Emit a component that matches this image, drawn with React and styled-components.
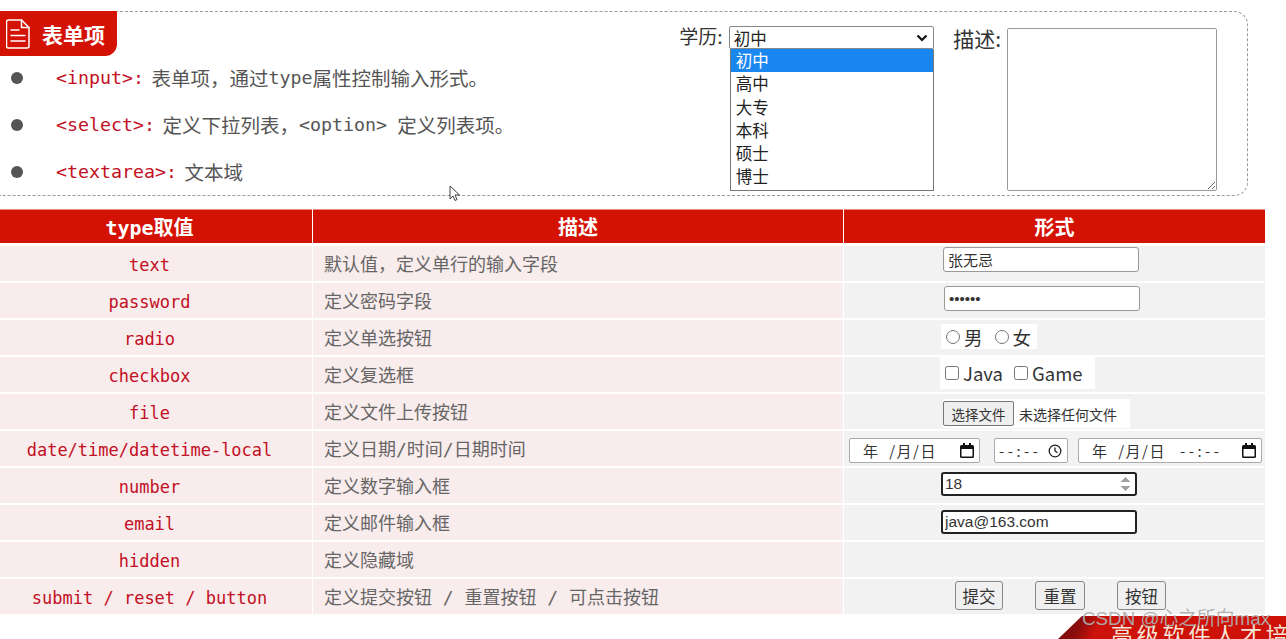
import React from "react";
import styled, { createGlobalStyle } from "styled-components";

const GlobalStyle = createGlobalStyle`
  html, body {
    margin: 0;
    padding: 0;
    background: #fff;
    overflow: hidden;
  }
  body {
    font-family: "Noto Sans CJK SC", "Noto Sans", sans-serif;
    color: #333;
  }
`;

const Page = styled.div`
  position: relative;
  width: 1286px;
  height: 639px;
  overflow: hidden;
  padding-top: 11px;
  box-sizing: border-box;
`;

const Panel = styled.section`
  display: flex;
  box-sizing: border-box;
  width: 1248px;
  height: 185px;
  padding-right: 30px;
  border: 1px dashed #999;
  border-left: none;
  border-radius: 0 14px 14px 0;
`;

const Intro = styled.div`
  flex: 1;
  margin-top: -1px;
`;

const Badge = styled.h2`
  display: flex;
  align-items: center;
  gap: 11px;
  box-sizing: border-box;
  width: 117px;
  height: 45px;
  margin: 0;
  padding-left: 6px;
  background: #d41204;
  border-radius: 0 0 12px 0;
  color: #fff;
  font-size: 21px;
  font-weight: 700;
`;

const Points = styled.ul`
  list-style: none;
  margin: -2px 0 0;
  padding: 0;
`;

const Point = styled.li`
  display: flex;
  align-items: center;
  height: 47px;
  font-size: 19.5px;
  color: #555;
  white-space: pre;

  &::before {
    content: "";
    width: 12px;
    height: 12px;
    margin: 0 33px 0 11px;
    border-radius: 50%;
    background: #555;
  }
`;

const Code = styled.span`
  font-family: "DejaVu Sans Mono", monospace;
  font-size: 18.3px;
  margin-right: ${(p) => p.$after || 0}px;
`;

const Tag = styled(Code)`
  color: #c20f24;
  margin-right: 3px;
`;

const FormArea = styled.div`
  display: flex;
  margin-top: 14px;
`;

const Label = styled.label`
  font-size: ${(p) => p.$size}px;
  line-height: ${(p) => p.$line}px;
  margin-right: 6px;
  color: #333;
`;

const Picker = styled.div`
  display: flex;
  flex-direction: column;
  width: 205px;
  margin-right: 19.5px;
`;

const SelectBox = styled.div`
  display: flex;
  align-items: center;
  justify-content: space-between;
  box-sizing: border-box;
  width: 205px;
  height: 23px;
  padding: 0 5px 0 4px;
  font-size: 16.5px;
  color: #222;
  background: #fff;
  border: 1px solid #888;
  border-radius: 2px;
`;

const OptionList = styled.ul`
  list-style: none;
  box-sizing: border-box;
  width: 204px;
  height: 142px;
  margin: 0 0 0 1px;
  padding: 0;
  background: #fff;
  border: 1px solid #777;
  border-top: none;
`;

const Option = styled.li`
  box-sizing: border-box;
  height: 23.3px;
  padding-left: 5px;
  font-size: 16.5px;
  line-height: 23px;
  color: ${(p) => (p.$active ? "#fff" : "#222")};
  background: ${(p) => (p.$active ? "#1a86f0" : "transparent")};
`;

const Notes = styled.textarea`
  box-sizing: border-box;
  width: 210px;
  height: 163px;
  margin: 2px 0 0 0;
  background: #fff;
  border: 1px solid #999;
  border-radius: 2px;
  outline: none;
`;

const Table = styled.div`
  display: grid;
  grid-template-columns: 312px 530px 421px;
  grid-template-rows: 35px repeat(10, 35px);
  column-gap: 1px;
  row-gap: 2px;
  width: 1265px;
  margin-top: 13px;
`;

const Head = styled.div`
  display: flex;
  align-items: center;
  justify-content: center;
  margin-bottom: 1px;
  box-sizing: border-box;
  padding-right: ${(p) => p.$shift || 0}px;
  background: #d41204;
  border-top: 1px solid #e98d7d;
  color: #fff;
  font-size: 20px;
  font-weight: 700;
`;

const HeadCode = styled.span`
  font-family: "DejaVu Sans Mono", monospace;
`;

const TypeCell = styled.div`
  display: flex;
  align-items: center;
  justify-content: center;
  padding: 2px 13px 0 0;
  background: #f9ecec;
  color: #c20f24;
  font-family: "DejaVu Sans Mono", monospace;
  font-size: 17px;
`;

const DescCell = styled.div`
  display: flex;
  align-items: center;
  padding: 0 0 2px 11px;
  background: #f9ecec;
  color: #666;
  font-family: "DejaVu Sans Mono", "Noto Sans CJK SC", sans-serif;
  font-size: 18px;
  white-space: pre;
`;

const FormCell = styled.div`
  display: flex;
  align-items: flex-start;
  box-sizing: border-box;
  padding: ${(p) => p.$top || 0}px 0 0 ${(p) => p.$left || 0}px;
  background: #f2f2f2;
`;

const Field = styled.input`
  box-sizing: border-box;
  width: 196px;
  height: ${(p) => (p.$dark ? 24 : 25)}px;
  padding: 0 ${(p) => (p.$dark ? 2 : 4)}px;
  font-family: ${(p) => (p.$latin ? '"Liberation Sans"' : '"Noto Sans CJK SC"')}, sans-serif;
  font-size: ${(p) => (p.$dark ? 15.5 : 15)}px;
  color: #333;
  background: #fff;
  border: ${(p) => (p.$dark ? "2px solid #222" : "1px solid #999")};
  border-radius: 3px;
  outline: none;

  &::-webkit-inner-spin-button {
    opacity: 1;
    filter: contrast(3);
  }
`;

const ChoiceBox = styled.div`
  display: flex;
  align-items: center;
  height: ${(p) => p.$height}px;
  padding: 0 ${(p) => p.$right}px 0 5px;
  background: #fff;
  font-size: 18.5px;
  color: #333;
`;

const Radio = styled.input`
  width: 14px;
  height: 14px;
  margin: 0 4px 0 ${(p) => p.$gap || 0}px;
`;

const FileBox = styled.div`
  display: flex;
  align-items: center;
  height: 29px;
  padding-right: 13px;
  background: #fff;
  font-size: 14px;
  color: #333;
`;

const FileButton = styled.button`
  box-sizing: border-box;
  width: 71px;
  height: 25px;
  margin-right: 5px;
  padding: 0;
  font-family: "Noto Sans CJK SC", sans-serif;
  font-size: 13.5px;
  color: #333;
  background: #efefef;
  border: 1px solid #777;
  border-radius: 2px;
`;

const DateRow = styled.div`
  display: flex;
`;

const DateField = styled.div`
  display: flex;
  align-items: center;
  box-sizing: border-box;
  width: ${(p) => p.$width}px;
  height: 25px;
  margin-right: ${(p) => p.$after || 0}px;
  padding: 0 ${(p) => p.$end || 5}px 0 ${(p) => p.$start || 13}px;
  background: #fff;
  border: 1px solid #aaa;
  border-radius: 2px;
  font-size: 15px;
  letter-spacing: 1.5px;
  color: #333;
  white-space: pre;

  svg {
    margin-left: auto;
  }
`;

const Dashes = styled.span`
  margin-left: ${(p) => p.$gap || 0}px;
  letter-spacing: 3.5px;
`;

const Action = styled.button`
  box-sizing: border-box;
  width: ${(p) => p.$width}px;
  height: 29px;
  margin-right: ${(p) => p.$after || 0}px;
  padding: 0;
  font-family: "Noto Sans CJK SC", sans-serif;
  font-size: 16.5px;
  color: #333;
  background: #f0f0f0;
  border: 1px solid #888;
  border-radius: 3px;
`;

const Banner = styled.div`
  position: absolute;
  right: 0;
  bottom: 0;
  width: 228px;
  height: 23px;
  overflow: hidden;
  padding-left: 53px;
  box-sizing: border-box;
  clip-path: polygon(24px 0, 100% 0, 100% 100%, 0 100%);
  background: linear-gradient(115deg, #7a0c0c 0, #8d0d0d 24px, #cc120a 40px, #cf1208 100%);
  color: #f6e6d8;
  font-family: "Liberation Serif", "Noto Sans CJK SC", serif;
  font-size: 22px;
  line-height: 40px;
  letter-spacing: 3.8px;
  white-space: nowrap;
`;

const Watermark = styled.div`
  position: absolute;
  left: 1082px;
  top: 608px;
  font-family: "Liberation Sans", "Noto Sans CJK SC", sans-serif;
  font-size: 18.8px;
  line-height: 22px;
  color: rgba(175, 175, 175, 0.95);
  white-space: nowrap;
`;

const Cursor = styled.svg`
  position: absolute;
  left: 449px;
  top: 185px;
`;

const DocIcon = () => (
  <svg width="25" height="30" viewBox="0 0 25 30" fill="none" stroke="#fff" strokeWidth="1.5" strokeLinejoin="round" strokeLinecap="round">
    <path d="M2.5 1h13l7.5 7.5V27a2 2 0 0 1-2 2H2.5a2 2 0 0 1-2-2V3a2 2 0 0 1 2-2z" />
    <path d="M15.5 1v7.5H23" />
    <path d="M5 11h8M5 16.5h14M5 22h14" />
  </svg>
);

const ChevronIcon = () => (
  <svg width="12" height="8" viewBox="0 0 12 8" fill="none" stroke="#111" strokeWidth="2.2">
    <path d="M1.5 1.5 6 6l4.500-4.500" />
  </svg>
);

const CalendarIcon = () => (
  <svg width="14" height="15" viewBox="0 0 14 15">
    <path d="M3 0h2v2h4V0h2v2h1.500A1.500 1.500 0 0 1 14 3.500v10a1.500 1.500 0 0 1-1.500 1.500h-11A1.500 1.500 0 0 1 0 13.500v-10A1.500 1.500 0 0 1 1.500 2H3z M1.500 6v7.500h11V6z" fill="#111" fillRule="evenodd" />
  </svg>
);

const ClockIcon = () => (
  <svg width="14" height="14" viewBox="0 0 14 14" fill="none" stroke="#222" strokeWidth="1.3">
    <circle cx="7" cy="7" r="5.800" />
    <path d="M7 3.500V7l2.500 1.800" />
  </svg>
);

const types = [
  "text",
  "password",
  "radio",
  "checkbox",
  "file",
  "date/time/datetime-local",
  "number",
  "email",
  "hidden",
  "submit / reset / button",
];

const descriptions = [
  "默认值，定义单行的输入字段",
  "定义密码字段",
  "定义单选按钮",
  "定义复选框",
  "定义文件上传按钮",
  "定义日期/时间/日期时间",
  "定义数字输入框",
  "定义邮件输入框",
  "定义隐藏域",
  "定义提交按钮 / 重置按钮 / 可点击按钮",
];

const samples = [
  <FormCell $top={1} $left={99}>
    <Field type="text" defaultValue="张无忌" readOnly />
  </FormCell>,
  <FormCell $top={3} $left={100}>
    <Field type="password" defaultValue="123456" $latin readOnly />
  </FormCell>,
  <FormCell $top={4} $left={97}>
    <ChoiceBox $height={25} $right={6}>
      <Radio type="radio" name="sex" />男
      <Radio type="radio" name="sex" $gap={12} />女
    </ChoiceBox>
  </FormCell>,
  <FormCell $left={96}>
    <ChoiceBox $height={32} $right={12}>
      <Radio type="checkbox" />
      Java
      <Radio type="checkbox" $gap={11} />
      Game
    </ChoiceBox>
  </FormCell>,
  <FormCell $top={5} $left={99}>
    <FileBox>
      <FileButton>选择文件</FileButton>未选择任何文件
    </FileBox>
  </FormCell>,
  <FormCell $top={7} $left={5}>
    <DateRow>
      <DateField $width={131} $after={14}>
        {"年  /月/日"}
        <CalendarIcon />
      </DateField>
      <DateField $width={74} $after={10} $start={4}>
        <Dashes>--:--</Dashes>
        <ClockIcon />
      </DateField>
      <DateField $width={184}>
        {"年  /月/日"}
        <Dashes $gap={14}>--:--</Dashes>
        <CalendarIcon />
      </DateField>
    </DateRow>
  </FormCell>,
  <FormCell $top={4} $left={97}>
    <Field type="number" defaultValue="18" $dark $latin readOnly />
  </FormCell>,
  <FormCell $top={5} $left={97}>
    <Field type="email" defaultValue="java@163.com" $dark $latin readOnly />
  </FormCell>,
  <FormCell />,
  <FormCell $top={2} $left={111}>
    <Action $width={48} $after={32}>提交</Action>
    <Action $width={50} $after={32}>重置</Action>
    <Action $width={49}>按钮</Action>
  </FormCell>,
];

const degrees = ["初中", "高中", "大专", "本科", "硕士", "博士"];

export default function App() {
  return (
    <Page>
      <GlobalStyle />
      <Panel>
        <Intro>
          <Badge>
            <DocIcon />
            表单项
          </Badge>
          <Points>
            <Point>
              <Tag>&lt;input&gt;:</Tag> 表单项，通过<Code>type</Code>属性控制输入形式。
            </Point>
            <Point>
              <Tag>&lt;select&gt;:</Tag> 定义下拉列表，<Code $after={6}>&lt;option&gt;</Code> 定义列表项。
            </Point>
            <Point>
              <Tag>&lt;textarea&gt;:</Tag> 文本域
            </Point>
          </Points>
        </Intro>
        <FormArea>
          <Label $size={19} $line={20}>学历:</Label>
          <Picker>
            <SelectBox>
              初中
              <ChevronIcon />
            </SelectBox>
            <OptionList>
              {degrees.map((d, i) => (
                <Option key={d} $active={i === 0}>
                  {d}
                </Option>
              ))}
            </OptionList>
          </Picker>
          <Label $size={21} $line={25}>描述:</Label>
          <Notes />
        </FormArea>
      </Panel>
      <Table>
        <Head $shift={13}>
          <span>
            <HeadCode>type</HeadCode>取值
          </span>
        </Head>
        <Head>描述</Head>
        <Head>形式</Head>
        {types.map((type, i) => (
          <React.Fragment key={type}>
            <TypeCell>{type}</TypeCell>
            <DescCell>{descriptions[i]}</DescCell>
            {samples[i]}
          </React.Fragment>
        ))}
      </Table>
      <Banner>高级软件人才培</Banner>
      <Watermark>CSDN @心之所向max</Watermark>
      <Cursor width="12" height="17" viewBox="0 0 12 17">
        <path d="M1 1v13l3-3 2 4.500 2-1-2-4.500h4.500z" fill="#fff" stroke="#444" strokeWidth="1" />
      </Cursor>
    </Page>
  );
}
